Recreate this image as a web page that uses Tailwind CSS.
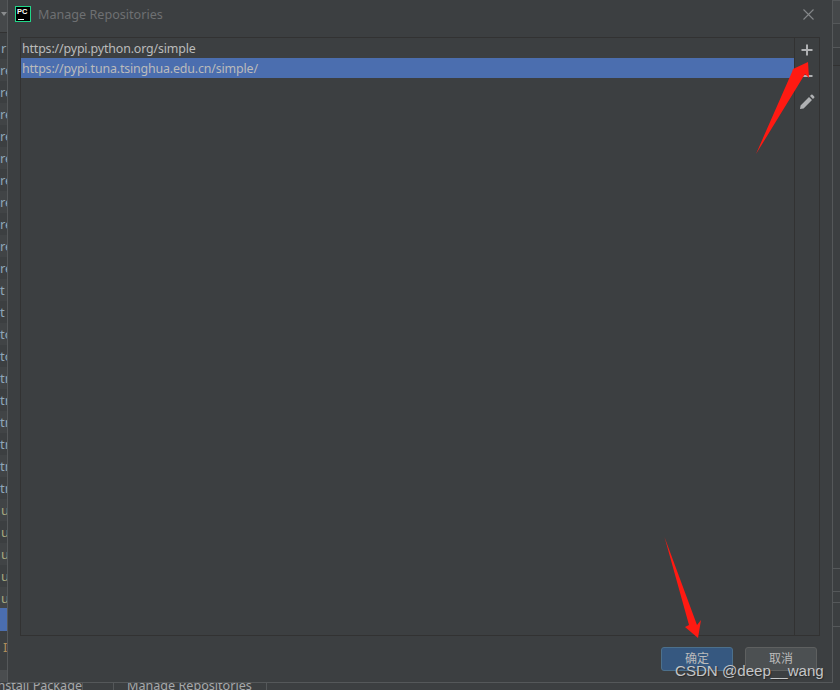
<!DOCTYPE html>
<html lang="en">
<head>
    <meta charset="UTF-8">
    <title>Manage Repositories</title>
    <script src="https://cdn.jsdelivr.net/npm/@tailwindcss/browser@4"></script>
</head>
<body class="bg-[#3c3f41] font-['Noto_Sans','Noto_Sans_CJK_SC',sans-serif]">
    <div class="relative w-[840px] h-[690px] overflow-hidden">

        <!-- window behind the dialog: left strip -->
        <div class="absolute left-0 top-0 w-[7px] h-[682px] flex flex-col overflow-hidden text-[13px] leading-[22px] text-[#8fa6b8] whitespace-nowrap">
            <div class="h-[33px] shrink-0 border-b border-[#323232] bg-[#45484a] text-[#8a8c8e] flex items-start pt-[12px]">
                <div class="w-0 h-0 border-x-[3px] border-x-transparent border-t-[4px] border-t-[#8a8c8e] ml-[1px]"></div>
            </div>
            <div class="h-[4px] shrink-0"></div>
            <div class="h-[22px] shrink-0 pl-[1px]">r</div>
            <div class="h-[22px] shrink-0 bg-[#414446]">re</div>
            <div class="h-[22px] shrink-0">re</div>
            <div class="h-[22px] shrink-0 bg-[#414446]">re</div>
            <div class="h-[22px] shrink-0">re</div>
            <div class="h-[22px] shrink-0 bg-[#414446]">re</div>
            <div class="h-[22px] shrink-0">re</div>
            <div class="h-[22px] shrink-0 bg-[#414446]">re</div>
            <div class="h-[22px] shrink-0">re</div>
            <div class="h-[22px] shrink-0 bg-[#414446]">re</div>
            <div class="h-[22px] shrink-0">re</div>
            <div class="h-[22px] shrink-0 bg-[#414446]">t</div>
            <div class="h-[22px] shrink-0">t</div>
            <div class="h-[22px] shrink-0 bg-[#414446]">to</div>
            <div class="h-[22px] shrink-0">to</div>
            <div class="h-[22px] shrink-0 bg-[#414446]">tr</div>
            <div class="h-[22px] shrink-0">tr</div>
            <div class="h-[22px] shrink-0 bg-[#414446]">tr</div>
            <div class="h-[22px] shrink-0">tr</div>
            <div class="h-[22px] shrink-0 bg-[#414446]">tr</div>
            <div class="h-[22px] shrink-0">tr</div>
            <div class="h-[22px] shrink-0 pl-[1px] bg-[#414446] text-[#a9a97e]">u</div>
            <div class="h-[22px] shrink-0 pl-[1px] text-[#a9a97e]">u</div>
            <div class="h-[22px] shrink-0 pl-[1px] bg-[#414446] text-[#a9a97e]">u</div>
            <div class="h-[22px] shrink-0 pl-[1px] text-[#a9a97e]">u</div>
            <div class="h-[21px] shrink-0 pl-[1px] bg-[#414446] text-[#a9a97e]">u</div>
            <div class="h-[23px] shrink-0 bg-[#4b6eaf]"></div>
            <div class="h-[8px] shrink-0"></div>
            <div class="h-[16px] shrink-0 flex items-center pl-[3px] text-[#b08d5c]">I</div>
            <div class="h-[15px] shrink-0"></div>
            <div class="flex-1 bg-[#4a4d4f]"></div>
        </div>

        <!-- window behind the dialog: right strip -->
        <div class="absolute right-0 top-0 w-[7px] h-[690px] flex flex-col">
            <div class="h-[1px] bg-[#55585a]"></div>
            <div class="h-[23px] bg-[#45484a] border-b border-[#55585a]"></div>
            <div class="h-[24px] bg-[#3e4143] border-b border-[#55585a]"></div>
            <div class="h-[18px] bg-[#3a3d3f] border-b border-[#323232]"></div>
            <div class="h-[494px]"></div>
            <div class="h-[9px] border-b border-[#55585a]"></div>
            <div class="h-[23px] border-b border-[#55585a]"></div>
            <div class="h-[11px] border-b border-[#55585a]"></div>
            <div class="h-[24px] border-b border-[#55585a]"></div>
        </div>

        <!-- window behind the dialog: bottom tabs -->
        <div class="absolute left-0 right-0 top-[677px] h-[22px] flex text-[12.6px] leading-[18px] text-[#a6a8aa] whitespace-nowrap">
            <div class="w-[83px] border-r border-[#55585a] overflow-hidden flex justify-end">Install Package</div>
            <div class="w-[30px]"></div>
            <div class="pl-[13px] pr-[14px] border-l border-r border-[#55585a]"><span class="underline">M</span>anage Repositories</div>
        </div>

        <!-- dialog -->
        <div class="absolute left-[7px] top-0 w-[826px] h-[683px] bg-[#3c3f41] border-x border-b border-[#55585a] flex flex-col">
            <div class="h-[37px] shrink-0 flex items-start pl-[7px] pr-[18px] pt-[6px]">
                <div class="relative w-[16px] h-[16px] bg-black border-[1.5px] border-[#21d789] shrink-0 overflow-hidden">
                    <span class="absolute left-[1px] top-[1px] text-[7.5px] leading-[8px] font-bold text-white font-['Liberation_Sans']">PC</span>
                    <div class="absolute left-[2px] bottom-[1.5px] w-[6px] h-[1px] bg-white"></div>
                </div>
                <span class="ml-[7px] text-[12.6px] leading-[18px] text-[#6e7072]">Manage Repositories</span>
                <svg class="ml-auto mt-[3px]" width="11" height="11" viewBox="0 0 11 11" fill="none" stroke="#85888a" stroke-width="1.1">
                    <path d="M0.5 0.5L10.5 10.5M10.5 0.5L0.5 10.5"/>
                </svg>
            </div>

            <div class="mx-[12px] flex h-[599px] border border-[#323232]">
                <div class="flex-1 text-[12.4px] tracking-[-0.15px] leading-[22px] text-[#bbbbbb]">
                    <div class="h-[20px] pl-[1px]">https://pypi.python.org/simple</div>
                    <div class="h-[20px] pl-[1px] bg-[#4b6eaf]">https://pypi.tuna.tsinghua.edu.cn/simple/</div>
                </div>
                <div class="w-[25px] shrink-0 border-l border-[#323232] flex flex-col items-center pt-[6px]">
                    <svg width="12" height="12" viewBox="0 0 12 12" fill="#afb1b3">
                        <path d="M5 0.5h2v4.5h4.5v2H7v4.5H5V7H0.5V5H5z"/>
                    </svg>
                    <svg class="mt-[14px]" width="12" height="12" viewBox="0 0 12 12" fill="#afb1b3">
                        <path d="M0.5 5h11v2H0.5z"/>
                    </svg>
                    <svg class="mt-[12px]" width="16" height="16" viewBox="0 0 16 16" fill="#afb1b3">
                        <path d="M1 15l0.6-3.6L10 3l3 3-8.4 8.4zM11 2l1.2-1.2a1 1 0 0 1 1.4 0l1.6 1.6a1 1 0 0 1 0 1.4L14 5z"/>
                    </svg>
                </div>
            </div>

            <div class="flex justify-end gap-[12px] pr-[15px] pt-[11px]">
                <button class="w-[72px] h-[24px] rounded-[3px] bg-[#365880] border border-[#4c708c] text-[12px] leading-[22px] text-[#bbbbbb]">确定</button>
                <button class="w-[72px] h-[24px] rounded-[3px] bg-[#4c5052] border border-[#5e6060] text-[12px] leading-[22px] text-[#bbbbbb]">取消</button>
            </div>
        </div>

        <!-- red annotation arrows -->
        <svg class="absolute left-0 top-0" width="840" height="690" fill="#ff1a12">
            <path d="M756 154L792 72L793 69L808 62L809 78L805 74Z"/>
            <path d="M664.5 537L697 625L701 620L698 638L685 627L689 625Z"/>
        </svg>

        <!-- watermark -->
        <div class="absolute left-[675px] top-[660px] text-[15.1px] leading-[22px] text-[#c4c6c8] font-['Liberation_Sans'] whitespace-nowrap [text-shadow:1px_1px_1px_#2b2b2b]">CSDN @deep__wang</div>
    </div>
</body>
</html>
